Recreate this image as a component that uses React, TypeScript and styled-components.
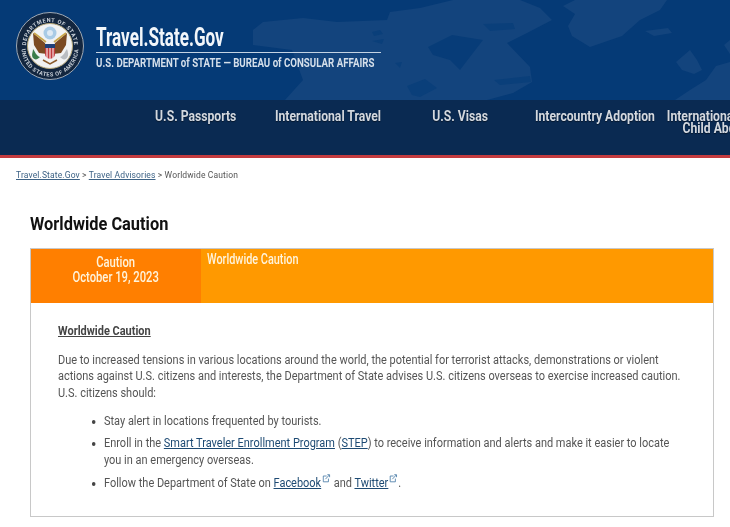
import React from "react";
import styled, { createGlobalStyle } from "styled-components";

const Global = createGlobalStyle`
  html, body { margin: 0; padding: 0; background: #fff; overflow: hidden; }
  body { font-family: Roboto, "Liberation Sans", sans-serif; }
  a { color: inherit; }
`;

const Page = styled.div`
  width: 730px;
  height: 527px;
  overflow: hidden;
  filter: blur(0.35px);
`;

const Narrow = styled.span<{ $x: number; $origin?: string }>`
  display: inline-block;
  white-space: nowrap;
  transform: scaleX(${(p) => p.$x});
  transform-origin: ${(p) => p.$origin ?? "left"} center;
`;

const Banner = styled.header`
  position: relative;
  height: 100px;
  background: #053a76;
  display: flex;
  align-items: flex-start;
  padding: 12px 0 0 16px;
  box-sizing: border-box;
  overflow: hidden;
`;

const MapArt = styled.svg`
  position: absolute;
  left: 0;
  top: 0;
  filter: blur(0.7px);
`;

const SealArt = styled.svg`
  position: relative;
  flex: none;
  display: block;
`;

const Brand = styled.div`
  position: relative;
  margin-left: 12px;
  padding-top: 12px;
  width: 285px;
`;

const Title = styled.div`
  font-size: 25px;
  line-height: 28px;
  font-weight: 700;
  color: #f2f6fa;
  border-bottom: 1px solid #c4d3e3;
  height: 28px;
  white-space: nowrap;
`;

const Subtitle = styled.div`
  font-size: 12.5px;
  line-height: 20px;
  font-weight: 700;
  color: #d5dfea;
  white-space: nowrap;
`;

const Nav = styled.nav`
  background: #0a2a52;
  border-bottom: 3px solid #c43b3f;
  display: flex;
  padding: 9px 0 0 130px;
  overflow: hidden;
  height: 46px;
`;

const NavItem = styled.div`
  flex: none;
  width: 132px;
  text-align: center;
  font-size: 14px;
  line-height: 12px;
  padding-top: 1px;
  font-weight: 700;
  color: #d3d8df;
  white-space: nowrap;
  text-shadow: 0 1px 1px rgba(0, 0, 0, 0.45);
`;

const Crumbs = styled.div`
  padding: 11px 0 0 16px;
  font-size: 8.5px;
  line-height: 12px;
  color: #555;
  letter-spacing: 0.14px;
  a { color: #3d6285; text-decoration: underline; }
`;

const Main = styled.main`
  padding: 0 16px 0 30px;
`;

const Heading = styled.h1`
  margin: 31px 0 0;
  font-size: 18px;
  line-height: 24px;
  font-weight: 700;
  color: #111;
`;

const Card = styled.section`
  margin-top: 12px;
  width: 684px;
  height: 269px;
  box-sizing: border-box;
  border: 1px solid #c8c8c8;
`;

const CardHead = styled.div`
  display: flex;
  height: 54px;
  background: #ff9900;
  color: #fff4dc;
  font-size: 15px;
  font-weight: 500;
`;

const Level = styled.div`
  flex: none;
  width: 170px;
  background: #ff7f00;
  text-align: center;
  padding-top: 6px;
  line-height: 15px;
  box-sizing: border-box;
`;

const CardTitle = styled.div`
  padding: 3px 0 0 6px;
  line-height: 15px;
`;

const CardBody = styled.div`
  padding: 20px 0 0 27px;
  font-size: 12.3px;
  line-height: 16.5px;
  color: #555;
`;

const Lead = styled.p`
  margin: 0 0 12px;
  font-weight: 700;
  color: #444;
  text-decoration: underline;
`;

const Para = styled.p`
  margin: 0;
  white-space: pre;
`;

const List = styled.ul`
  margin: 12px 0 0;
  padding: 0 0 0 51.5px;
  li { margin-bottom: 5.5px; white-space: pre; }
  li::marker { color: #444; }
  a { color: #1d4a73; text-decoration: underline; }
`;

const ExtArt = styled.svg`
  display: inline-block;
  vertical-align: 4px;
  margin-left: 1px;
`;

function Ext() {
  return (
    <ExtArt width="10" height="9" viewBox="0 0 10 9" fill="none" stroke="#4a7ca8" strokeWidth="0.9">
      <path d="M5 2H1.2v5.8H7V4.6" />
      <path d="M3.6 5.2 8 1" />
      <path d="M5.8 .7H8.3V3.2" />
    </ExtArt>
  );
}

function WorldMap() {
  return (
    <MapArt width="730" height="100" viewBox="0 0 730 100" fill="#13447d">
      <path d="M253 30 263 22 303 18 337 22 387 20 390 12 420 8 453 0H520L540 8 552 20 527 33 507 43 530 67 532 82 513 93 487 100H285L303 80 292 50 253 45Z" />
      <path d="M563 6 575 0H667L660 10 640 20 622 36 590 47 572 36 568 26 575 14Z" />
      <path d="M645 31 668 28 672 33 654 36Z" />
      <path d="M676 62 690 50 697 60 702 70 694 74 682 70Z" />
      <path d="M675 100 690 90 706 80 716 66 730 62V100Z" />
      <path d="M724 45 730 40V54Z" />
      <path d="M428 47 452 35 483 40 473 53 460 70 450 60 433 55Z" fill="#073c78" />
      <path d="M483 24 513 23 515 29 490 31Z" fill="#0a3f7a" />
      <path d="M407 86 425 79 437 88 420 97 412 95Z" fill="#0a3f7a" />
      <path d="M494 80 530 76 531 82 500 85Z" fill="#0a3f7a" />
      <path d="M372 32 380 30 383 34 374 36ZM372 41 384 39 382 44Z" fill="#0a3f7a" />
      <path d="M395 63 402 62 400 68Z" fill="#0a3f7a" />
    </MapArt>
  );
}

function Seal() {
  return (
    <SealArt width="68" height="68" viewBox="0 0 68 68">
      <defs>
        <path id="sealTop" d="M10 34a24 24 0 0 1 48 0" />
        <path id="sealBottom" d="M5.5 36a28.5 28.5 0 0 0 57 0" />
      </defs>
      <circle cx="34" cy="34" r="33.5" fill="#13263f" stroke="#9fa9b5" strokeWidth="1" />
      <circle cx="34" cy="34" r="22.5" fill="#f1f2f3" stroke="#b9a97a" strokeWidth="1" />
      <text fontFamily="Roboto, sans-serif" fontSize="5.6" fontWeight="700" fill="#c9d0d8" letterSpacing="0.6">
        <textPath href="#sealTop" startOffset="50%" textAnchor="middle">DEPARTMENT OF STATE</textPath>
      </text>
      <text fontFamily="Roboto, sans-serif" fontSize="5.6" fontWeight="700" fill="#c9d0d8" letterSpacing="0.5">
        <textPath href="#sealBottom" startOffset="50%" textAnchor="middle">UNITED STATES OF AMERICA</textPath>
      </text>
      <circle cx="34" cy="21" r="6.5" fill="#a9cbe6" />
      <circle cx="34" cy="21" r="3" fill="#dfeaf4" />
      <path d="M17 21 29 31 31 42 23 41 18 33Z" fill="#7b4a22" />
      <path d="M51 21 39 31 37 42 45 41 50 33Z" fill="#7b4a22" />
      <path d="M18 21 30 30M50 21 38 30" stroke="#c9a64a" strokeWidth="1.6" />
      <path d="M29 32h10v4H29Z" fill="#1f3f78" />
      <path d="M29 36h10v6q0 4-5 5-5-1-5-5Z" fill="#c23b3f" />
      <path d="M31 36v10M34 36v11M37 36v10" stroke="#fff" strokeWidth="1" />
      <path d="M24 45c-4-1-5-6-7-8 0 3-2 6 0 9 2 2 4 2 7-1Z" fill="#3a7d4a" />
      <path d="M44 45c4-1 5-6 7-8 1 3 2 6 0 9-2 2-4 2-7-1Z" fill="#b9bdc2" />
      <path d="M27 48 34 52 41 48" stroke="#8a5a2b" strokeWidth="1.5" fill="none" />
    </SealArt>
  );
}

export default function App() {
  return (
    <Page>
      <Global />
      <Banner>
        <WorldMap />
        <Seal />
        <Brand>
          <Title><Narrow $x={0.685}>Travel.State.Gov</Narrow></Title>
          <Subtitle><Narrow $x={0.775}>U.S. DEPARTMENT of STATE — BUREAU of CONSULAR AFFAIRS</Narrow></Subtitle>
        </Brand>
      </Banner>
      <Nav>
        <NavItem><Narrow $x={0.87} $origin="center">U.S. Passports</Narrow></NavItem>
        <NavItem><Narrow $x={0.87} $origin="center">International Travel</Narrow></NavItem>
        <NavItem><Narrow $x={0.87} $origin="center">U.S. Visas</Narrow></NavItem>
        <NavItem><Narrow $x={0.87} $origin="center">Intercountry Adoption</Narrow></NavItem>
        <NavItem><Narrow $x={0.87} $origin="center">International Parental<br />Child Abduction</Narrow></NavItem>
      </Nav>
      <Crumbs>
        <a href="#">Travel.State.Gov</a> &gt; <a href="#">Travel Advisories</a> &gt; Worldwide Caution
      </Crumbs>
      <Main>
        <Heading><Narrow $x={0.91}>Worldwide Caution</Narrow></Heading>
        <Card>
          <CardHead>
            <Level><Narrow $x={0.75} $origin="center">Caution<br />October 19, 2023</Narrow></Level>
            <CardTitle><Narrow $x={0.725}>Worldwide Caution</Narrow></CardTitle>
          </CardHead>
          <CardBody>
            <Narrow $x={0.8925}>
              <Lead>Worldwide Caution</Lead>
              <Para>{"Due to increased tensions in various locations around the world, the potential for terrorist attacks, demonstrations or violent\nactions against U.S. citizens and interests, the Department of State advises U.S. citizens overseas to exercise increased caution.\nU.S. citizens should:"}</Para>
              <List>
                <li>Stay alert in locations frequented by tourists.</li>
                <li>Enroll in the <a href="#">Smart Traveler Enrollment Program</a> (<a href="#">STEP</a>) to receive information and alerts and make it easier to locate{"\n"}you in an emergency overseas.</li>
                <li>Follow the Department of State on <a href="#">Facebook</a><Ext /> and <a href="#">Twitter</a><Ext />.</li>
              </List>
            </Narrow>
          </CardBody>
        </Card>
      </Main>
    </Page>
  );
}
